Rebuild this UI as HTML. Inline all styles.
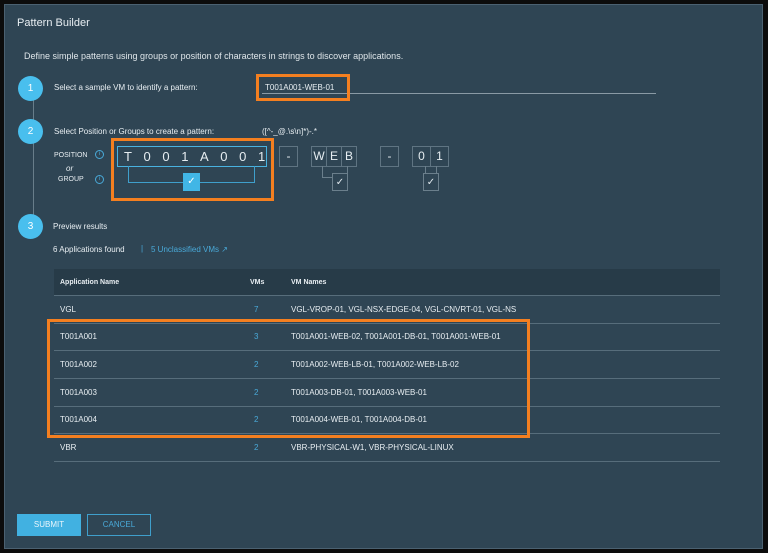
<!DOCTYPE html>
<html><head><style>
*{margin:0;padding:0;box-sizing:border-box}
body{width:768px;height:553px;background:#0c0c0c;font-family:"Liberation Sans",sans-serif;color:#e8eef2;position:relative;overflow:hidden;font-size:8px}
.p{position:absolute;left:4px;top:4px;width:759px;height:545px;background:#2f4554;border:1px solid #4b6171}
.a{position:absolute;white-space:nowrap}
.c{position:absolute;width:25px;height:25px;border-radius:50%;background:#49bfee;color:#fff;font-size:10px;text-align:center;line-height:25px}
.b{position:absolute;border:1px solid #5f7482;color:#e6edf1;font-size:12px;text-align:center;line-height:19px}
.o{position:absolute;border:3px solid #f47f20}
.line{position:absolute;left:54px;width:666px;height:1px;background:#576d7b}
.chk{position:absolute;border:1px solid #6b7f8c;width:16px;height:18px;color:#dfe7ec;font-size:10px;text-align:center;line-height:17px}
.r{position:absolute;font-size:8px}
</style></head><body>
<div class="p"></div>
<div class="a" style="left:17px;top:17px;font-size:11px">Pattern Builder</div>
<div class="a" style="left:24px;top:51px;font-size:9px;color:#dfe6ea">Define simple patterns using groups or position of characters in strings to discover applications.</div>
<div class="a" style="left:33px;top:88px;width:1px;height:140px;background:#687d8a"></div>
<div class="c" style="left:18px;top:76px">1</div>
<div class="c" style="left:18px;top:119px">2</div>
<div class="c" style="left:18px;top:214px">3</div>
<div class="a" style="left:54px;top:83px">Select a sample VM to identify a pattern:</div>
<div class="a" style="left:265px;top:83px;font-size:8px">T001A001-WEB-01</div>
<div class="a" style="left:262px;top:93px;width:394px;height:1px;background:#8a9aa5"></div>
<div class="o" style="left:256px;top:74px;width:94px;height:27px"></div>
<div class="a" style="left:54px;top:127px">Select Position or Groups to create a pattern:</div>
<div class="a" style="left:262px;top:127px">([^-_@.\s\n]*)-.*</div>
<div class="a" style="left:54px;top:152px;font-size:7px">POSITION</div>
<div class="a" style="left:66px;top:164px;font-size:8px;font-style:italic">or</div>
<div class="a" style="left:58px;top:176px;font-size:7px">GROUP</div>
<div class="a" style="left:95px;top:150px;width:9px;height:9px;border:1px solid #49a9d8;border-radius:50%;font-size:6px;color:#49a9d8;text-align:center;line-height:7px;font-style:italic">i</div>
<div class="a" style="left:95px;top:175px;width:9px;height:9px;border:1px solid #49a9d8;border-radius:50%;font-size:6px;color:#49a9d8;text-align:center;line-height:7px;font-style:italic">i</div>
<div class="b" style="left:117px;top:146px;width:150px;height:21px;border-color:#49b2e0;letter-spacing:11.6px;padding-left:6px;font-size:13px">T001A001</div>
<div class="a" style="left:128px;top:166px;width:127px;height:17px;border:1px solid #3f9fcc;border-top:none"></div>
<div class="a" style="left:183px;top:173px;width:17px;height:18px;background:#41b6e6;color:#fff;font-size:10px;text-align:center;line-height:18px">✓</div>
<div class="o" style="left:111px;top:138px;width:163px;height:63px"></div>
<div class="b" style="left:279px;top:146px;width:19px;height:21px">-</div>
<div class="b" style="left:311px;top:146px;width:16px;height:21px">W</div>
<div class="b" style="left:326px;top:146px;width:16px;height:21px">E</div>
<div class="b" style="left:341px;top:146px;width:16px;height:21px">B</div>
<div class="a" style="left:322px;top:166px;width:26px;height:12px;border:1px solid #6b7f8c;border-top:none"></div>
<div class="chk" style="left:332px;top:173px;background:#2f4554">✓</div>
<div class="b" style="left:380px;top:146px;width:19px;height:21px">-</div>
<div class="b" style="left:412px;top:146px;width:19px;height:21px">0</div>
<div class="b" style="left:430px;top:146px;width:19px;height:21px">1</div>
<div class="a" style="left:425px;top:166px;width:12px;height:8px;border:1px solid #6b7f8c;border-top:none;border-bottom:none"></div>
<div class="chk" style="left:423px;top:173px;background:#2f4554">✓</div>
<div class="a" style="left:53px;top:222px">Preview results</div>
<div class="a" style="left:53px;top:245px">6 Applications found</div>
<div class="a" style="left:141px;top:244px;color:#49a9d8">|</div>
<div class="a" style="left:151px;top:245px;color:#49a9d8">5 Unclassified VMs ↗</div>
<div class="a" style="left:54px;top:269px;width:666px;height:26px;background:#273b48"></div>
<div class="a" style="left:60px;top:279px;font-size:7px;font-weight:bold">Application Name</div>
<div class="a" style="left:250px;top:279px;font-size:7px;font-weight:bold">VMs</div>
<div class="a" style="left:291px;top:279px;font-size:7px;font-weight:bold">VM Names</div>
<div class="line" style="top:295px"></div>
<div class="line" style="top:323px"></div>
<div class="line" style="top:350px"></div>
<div class="line" style="top:378px"></div>
<div class="line" style="top:406px"></div>
<div class="line" style="top:433px"></div>
<div class="line" style="top:461px"></div>
<div class="r" style="left:60px;top:305px">VGL</div><div class="r" style="left:254px;top:305px;color:#49a9d8">7</div><div class="r" style="left:291px;top:305px">VGL-VROP-01, VGL-NSX-EDGE-04, VGL-CNVRT-01, VGL-NS</div>
<div class="r" style="left:60px;top:332px">T001A001</div><div class="r" style="left:254px;top:332px;color:#49a9d8">3</div><div class="r" style="left:291px;top:332px">T001A001-WEB-02, T001A001-DB-01, T001A001-WEB-01</div>
<div class="r" style="left:60px;top:360px">T001A002</div><div class="r" style="left:254px;top:360px;color:#49a9d8">2</div><div class="r" style="left:291px;top:360px">T001A002-WEB-LB-01, T001A002-WEB-LB-02</div>
<div class="r" style="left:60px;top:388px">T001A003</div><div class="r" style="left:254px;top:388px;color:#49a9d8">2</div><div class="r" style="left:291px;top:388px">T001A003-DB-01, T001A003-WEB-01</div>
<div class="r" style="left:60px;top:415px">T001A004</div><div class="r" style="left:254px;top:415px;color:#49a9d8">2</div><div class="r" style="left:291px;top:415px">T001A004-WEB-01, T001A004-DB-01</div>
<div class="r" style="left:60px;top:443px">VBR</div><div class="r" style="left:254px;top:443px;color:#49a9d8">2</div><div class="r" style="left:291px;top:443px">VBR-PHYSICAL-W1, VBR-PHYSICAL-LINUX</div>
<div class="o" style="left:47px;top:319px;width:483px;height:119px"></div>
<div class="a" style="left:17px;top:514px;width:64px;height:22px;background:#41b1e1;color:#eaf6fc;font-size:8px;text-align:center;line-height:22px">SUBMIT</div>
<div class="a" style="left:87px;top:514px;width:64px;height:22px;border:1px solid #3f9fcc;color:#49a9d8;font-size:8px;text-align:center;line-height:20px">CANCEL</div>
</body></html>
